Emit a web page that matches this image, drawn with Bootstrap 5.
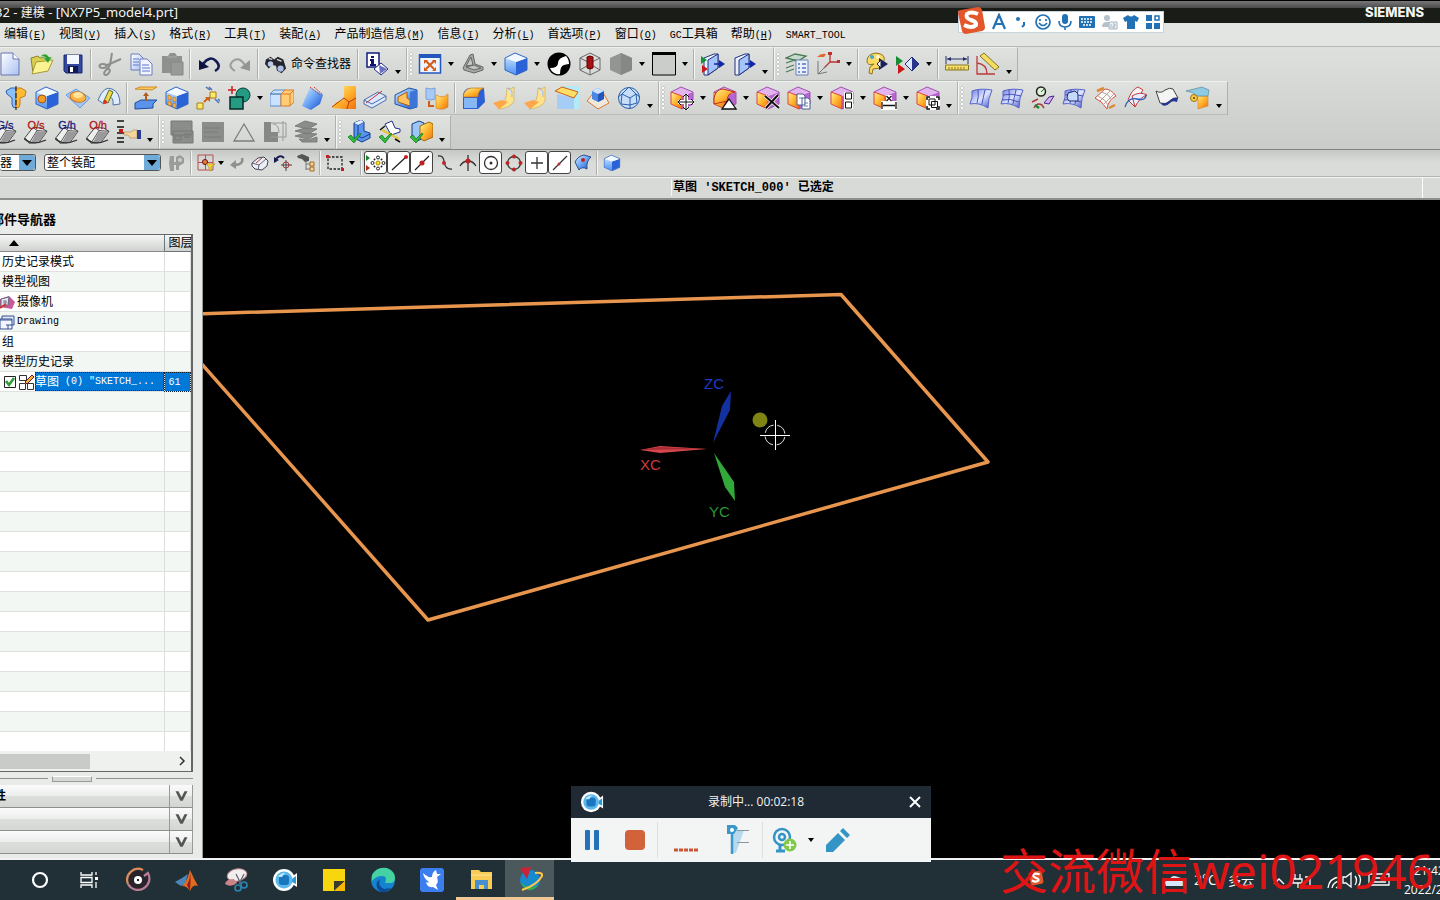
<!DOCTYPE html>
<html lang="zh-CN">
<head>
<meta charset="utf-8">
<meta name="viewport" content="width=device-width, initial-scale=1">
<title>建模 - [NX7P5_model4.prt]</title>
<link href="https://cdn.jsdelivr.net/npm/bootstrap@5.3.0/dist/css/bootstrap.min.css" rel="stylesheet">
<style>
body{font-family:"Liberation Sans","Noto Sans CJK SC",sans-serif;font-size:12px;line-height:16px;color:#000;background:#d6d9d6;overflow:hidden}
button{border:0;background:none;padding:0;color:inherit;flex:none}
svg{display:block;flex:none}
.mono{font-family:"Liberation Mono","Noto Sans CJK SC",monospace;font-size:10px}
.titlebar{height:23px;background:linear-gradient(#000 0 1px,#777 1px,#4a4a4a 8px,#1a1c18 8px);color:#f4f4f4;font-family:"Noto Sans","Noto Sans CJK SC",sans-serif}
.titlebar span{padding-top:2px}
.apptitle{margin-left:-5px;font-size:13px}
.apptitle i{font-style:normal;font-size:12px}
.brand{font-family:Inter,"Liberation Sans",sans-serif;font-weight:800;font-size:13px}
.menubar{height:24px;background:#e2e5e2;padding:2px 0 0 4px;gap:13px;border-bottom:1px solid #b4b7b4}
.menubar a{color:#000;text-decoration:none;white-space:nowrap}
.bars{background:linear-gradient(#dde0dd,#c9ccc9);border-bottom:1px solid #808380}
.barrow{height:34px}
.grp{height:34px;border-top:1px solid #eff1ef;border-bottom:1px solid #b9bcb9;border-right:1px solid #aeb1ae;padding-right:2px;background:linear-gradient(#dfe2df,#d1d4d1)}
.grp+.grp{border-left:1px solid #f4f6f4}
.grip{width:6px;height:24px;background:radial-gradient(circle,#fafafa 1px,#a9aca9 2px,transparent 2px) 1px 0/4px 4px repeat-y}
.tb{width:31px;height:30px;display:flex;align-items:center;justify-content:center}
.tb svg{width:24px;height:24px}
.finder{width:94px;height:30px;display:flex;align-items:center;gap:4px;padding-left:4px}
.car{width:12px;height:24px;display:flex;align-items:center;justify-content:center}
.car::after{content:"";border:3px solid transparent;border-top:4px solid #000;border-bottom:0}
.car.lo{align-items:flex-end;padding-bottom:2px}
.car.slim{width:8px}
.bsep{width:6px;height:30px;background:linear-gradient(90deg,transparent 2px,#acafac 2px 3px,#f4f6f4 3px 4px,transparent 4px)}
.selbar{height:27px;background:linear-gradient(#c6c9c6,#d9dcd9 50%);border-bottom:1px solid #b2b5b2}
.selbar .bsep{height:24px}
.combo{appearance:none;height:17px;border:1px solid #555;border-radius:3px;padding:0 20px 0 2px;font-size:12px;line-height:14px;color:#000;background:#fff;font-family:inherit}
.combowrap{position:relative;height:17px}
.combowrap svg{position:absolute;right:1px;top:1px;pointer-events:none}
.sb{width:23px;height:23px;display:flex;align-items:center;justify-content:center}
.sb svg{width:20px;height:20px}
.sb.on{background:#fff;border:1px solid #444;border-radius:3px}
.cue{height:23px;background:#d7dad7;border-bottom:2px solid #8b8e8b;border-top:1px solid #f3f5f3}
.cue output{font-size:12px;font-weight:700;border-left:1px solid #f5f5f5;white-space:pre;padding-left:1px}
.cue .mono{font-size:12px}
.side{width:203px;background:#e8ebe8;border-right:1px solid #9a9d9a;overflow:hidden}
.side h1{font-size:13px;line-height:18px;font-weight:700;margin:11px 0 5px -9px}
.tree{width:193px;background:#fff;border:solid #666;border-width:1px 2px 1px 0;overflow:hidden}
.tree table{width:191px;table-layout:fixed;border-collapse:collapse}
.tree th{height:17px;padding:0;background:linear-gradient(#f5f6f5,#cfd2cf);border-bottom:1px solid #888;font-weight:400;overflow:hidden;white-space:nowrap;line-height:15px}
.tree td{height:20px;padding:0;border-bottom:1px solid #dfe1df;border-right:1px solid #dcdfdc;white-space:nowrap;overflow:hidden;line-height:16px}
.tree tbody tr:nth-child(even){background:#f3f7f4}
.tree .cell{display:flex;align-items:center;gap:2px;padding:1px 0 0 2px;height:19px}
.selrow{background:#0078d7;color:#fff;outline:1px dotted #123;outline-offset:-1px}
.hbar{height:20px;background:#eff1ef}
.hthumb{width:90px;height:15px;background:#c9cbc9}
.split{height:13px}
.split hr{margin:0;border-top:1px solid #8f928f;opacity:1;flex:1}
.split span{width:40px;height:6px;border:1px solid #999;border-top-color:#fff;background:#d5d8d5}
.pane{width:193px;height:23px;border-bottom:1px solid #8d908d;border-right:1px solid #999;background:linear-gradient(#fafbfa,#eceeec 50%,#dcdfdc 50%,#d3d6d3);font-weight:700}
.pane button{width:23px;height:22px;border-left:1px solid #999}
.axis{font-family:"Liberation Sans",sans-serif;font-size:15px}
.view{background:#000}
.taskbar{height:42px;border-top:2px solid #f2f2f2;background:#213037;color:#fff;padding-left:15px}
.tk{width:49px;height:40px;display:flex;align-items:center;justify-content:center}
.tk svg{width:26px;height:26px}
.tk.run{border-bottom:3px solid #f0c896}
.tk.act{background:#4b585c}
.ime{position:absolute;left:958px;top:11px;width:206px;height:22px;background:#fff;border:1px solid #c9d3da;padding-left:29px}
.ime button{width:22px;display:flex;justify-content:center}
.ime svg{width:18px;height:18px}
.ime .slogo{position:absolute;left:-2px;top:-6px;width:29px;height:29px}
.rec{position:absolute;left:571px;top:786px;width:360px;background:#f3f5f5}
.rechead{height:32px;background:#1f2a35;color:#f2f2f2;font-family:"Open Sans","Noto Sans CJK SC",sans-serif}
.recbody{height:44px}
.recbody .pausebtn{margin-right:20px}
.recbody .flagbtn{margin:0 8px 0 20px}
.rline{width:1px;height:36px;background:#dcdfe0}
.wm{position:absolute;right:6px;bottom:0;font-family:"Noto Sans","Noto Sans CJK SC",sans-serif;font-size:48px;line-height:58px;color:#df1414;white-space:nowrap;pointer-events:none}
.tray{font-family:"Open Sans","Noto Sans CJK SC",sans-serif;width:420px}
</style>
</head>
<body class="vh-100 d-flex flex-column">
<svg width="0" height="0" class="position-absolute" aria-hidden="true">
<defs>
<linearGradient id="gb" x1="0" y1="0" x2="1" y2="1"><stop offset="0" stop-color="#dff0ff"/><stop offset=".5" stop-color="#6aa5f5"/><stop offset="1" stop-color="#1747c8"/></linearGradient>
<linearGradient id="go" x1="0" y1="0" x2="1" y2="1"><stop offset="0" stop-color="#fff29a"/><stop offset=".5" stop-color="#ffb52e"/><stop offset="1" stop-color="#f07010"/></linearGradient>
<linearGradient id="gl" x1="0" y1="0" x2="1" y2="1"><stop offset="0" stop-color="#fff"/><stop offset="1" stop-color="#a9c0f2"/></linearGradient>
<linearGradient id="gs" x1="0" y1="0" x2="1" y2="1"><stop offset="0" stop-color="#6878e0"/><stop offset=".5" stop-color="#e0e6ff"/><stop offset="1" stop-color="#3548c4"/></linearGradient>
<linearGradient id="gv" x1="0" y1="0" x2="0" y2="1"><stop offset="0" stop-color="#b9dcff"/><stop offset="1" stop-color="#4e8ff0"/></linearGradient>
</defs>
<symbol id="new" viewBox="0 0 24 24"><path d="M2 1h12l6 6v16H2z" fill="url(#gl)" stroke="#6875b5"/><path d="M14 1v6h6" fill="#fff" stroke="#6875b5"/></symbol>
<symbol id="open" viewBox="0 0 24 24"><path d="M1 6l7-2 2 2 8-1v5H7L3 21z" fill="#d9cf50" stroke="#8b842c"/><path d="M2 22L6 10l17-2-5 11z" fill="#fbf391" stroke="#a79b34"/><path d="M10 5q5-6 9 0h3l-4 6-5-5h3q-3-3-6-1z" fill="#2f9d2f" stroke="#bdeab5" stroke-width=".5"/></symbol>
<symbol id="save" viewBox="0 0 24 24"><path d="M3 3h18v18H5l-2-2z" fill="#3548a0" stroke="#1b2870"/><path d="M6 3h12v9H6z" fill="#f4f7ff"/><path d="M7 14h10v7H7z" fill="#111a50"/><path d="M9 15h3v5H9z" fill="#fff"/></symbol>
<symbol id="cut" viewBox="0 0 24 24"><g fill="none" stroke="#8c8f8c" stroke-width="2"><path d="M14 1l-2 12-3 4M23 7L7 14"/><ellipse cx="5" cy="14" rx="3.500" ry="2"/><ellipse cx="9" cy="20" rx="3.500" ry="2" transform="rotate(-50 9 20)"/></g></symbol>
<symbol id="copy" viewBox="0 0 24 24"><path d="M2 2h8l4 4v12H2z" fill="url(#gl)" stroke="#6d7cbd"/><path d="M11 7h7l5 5v11H11z" fill="#f2f5ff" stroke="#6d7cbd"/><path d="M4 7h6M4 10h6M4 13h6M13 13h7M13 16h8M13 19h8" stroke="#5a77cc"/></symbol>
<symbol id="paste" viewBox="0 0 24 24"><path d="M2 4h6l2-3h5l2 3h5v17H2z" fill="#8e918e"/><path d="M11 10h12v13H11z" fill="#979a97" stroke="#858885"/><path d="M7 5h10" stroke="#9d9f9d" stroke-width="2"/></symbol>
<symbol id="undo" viewBox="0 0 24 24"><path d="M6 12q7-9 13-3t-1 10" fill="none" stroke="#151a50" stroke-width="2.500"/><path d="M2 8v10l10-3z" fill="#0d1240"/></symbol>
<symbol id="redo" viewBox="0 0 24 24"><path d="M17 13q-6-9-12-4t2 10" fill="none" stroke="#9a9d9a" stroke-width="2"/><path d="M22 8v11l-10-3z" fill="#929592"/></symbol>
<symbol id="bino" viewBox="0 0 24 24"><path d="M1 7l5-3 4 3 4-3 6 3 3 10-5 5-5-3-1-5-4-1-4 4-4-5z" fill="#23242c"/><circle cx="6" cy="12" r="3" fill="#bcc9ef"/><circle cx="17" cy="17" r="3.400" fill="#aebbe7"/><path d="M4 6l4 1M13 7l5 2" stroke="#d0d0d8" stroke-width="1.500"/></symbol>
<symbol id="info" viewBox="0 0 24 24"><path d="M2 1h12v14H2z" fill="#fff" stroke="#111a80" stroke-width="1.500"/><path d="M6 4h3v2H6zM5 7h4v5h2v2H5v-2h1V9H5z" fill="#101470"/><path d="M9 17l7-6 7 6-7 6z" fill="#fff" stroke="#222a80"/><path d="M14 13l8 4-7 5z" fill="#6970c0"/></symbol>
<symbol id="fit" viewBox="0 0 24 24"><path d="M1.500 3h21v18h-21z" fill="#eef4ff" stroke="#2457be" stroke-width="1.500"/><path d="M1 2h22v4H1z" fill="#2457be"/><path d="M8 9l8 8M16 9l-8 8" stroke="#d65b16" stroke-width="2"/><path d="M6 8h4l-4 4zM18 8v4l-4-4zM6 19v-4l4 4zM18 19h-4l4-4z" fill="#d65b16"/></symbol>
<symbol id="tray" viewBox="0 0 24 24"><path d="M2 16L9 3l3-1 2 10 8 3v3l-9 3-10-3z" fill="#a5a8a5" stroke="#666"/><path d="M5 14l5-9 2 8z" fill="#c6c9c6" stroke="#666"/><path d="M5 15l8-2 7 3-7 2z" fill="#bfc2bf" stroke="#666"/></symbol>
<symbol id="cube" viewBox="0 0 24 24"><path d="M1 6l11 4v13L1 18z" fill="url(#gv)"/><path d="M12 10l11-4v12l-11 5z" fill="#2a63d8"/><path d="M1 6l10-5 12 5-11 4z" fill="#f1f8ff"/><path d="M1 6l10-5 12 5v12l-11 5-11-5z" fill="none" stroke="#2f66c6"/></symbol>
<symbol id="yin" viewBox="0 0 24 24"><circle cx="12" cy="12" r="11.500"/><path d="M19 4q-8 2-8 7 0 5-8 5 3 7 10 6 0-8 4-9 4-1 5-1 0-5-3-8z" fill="#fff"/><path d="M22 13q-7 0-8 9 7-1 8-9z"/></symbol>
<symbol id="hexred" viewBox="0 0 24 24"><path d="M12 1l10 5v12l-10 5-10-5V6zM2 6l10 5 10-5M12 11v12M2 18l10-6 10 6" fill="#dadcda" stroke="#666"/><path d="M9 5q3-2 6 0v11q-3 2-6 0z" fill="#a31212" stroke="#600"/></symbol>
<symbol id="hexgray" viewBox="0 0 24 24"><path d="M12 1l11 5v12l-11 5-11-5V6z" fill="#929592"/><path d="M12 1v22l11-5V6z" fill="#858885"/></symbol>
<symbol id="rectb" viewBox="0 0 24 24"><path d="M.5 1h23v22H.5z" fill="#cbcdcb" stroke="#000"/><path d="M0 0h24v3H0z"/></symbol>
<symbol id="door" viewBox="0 0 24 24"><path d="M3 6l10-4h4v14l-10 7H3z" fill="#e9f1ff" stroke="#22307e"/><path d="M7 8l10-6v14L7 23z" fill="#a5c4fa" stroke="#22307e"/><path d="M13 12h7" stroke="#1226a8" stroke-width="1.500"/><path d="M18 8l6 4-6 4z" fill="#1226a8"/></symbol>
<symbol id="door2" viewBox="0 0 24 24"><use href="#door"/><path d="M0 4l6 4-6 4z" fill="#159335"/><path d="M1 13l6 4-6 4z" fill="#c91818"/></symbol>
<symbol id="layers" viewBox="0 0 24 24"><path d="M1 6l9-4 11 2-8 5zM1 11l9-3 9 2M1 16l8-3M1 20l8-3" fill="#c6dacb" stroke="#4b7b58" stroke-width="1.300"/><path d="M11 8h12v15H11z" fill="#eaf0ff" stroke="#6980b5"/><path d="M13 12h2m2 0h4m-8 4h2m2 0h4m-8 4h2m2 0h4" stroke="#5276bd" stroke-width="1.500"/></symbol>
<symbol id="axes" viewBox="0 0 24 24"><path d="M14 1v9h10M14 10l-6 6" stroke="#bc3030" fill="none" stroke-width="1.300"/><path d="M2 9v13l9-2M2 22l7-7" stroke="#777" fill="none"/><path d="M1 5q4-4 9-3L8 5z" fill="#e0662a"/><path d="M12 0h4v3h-4zM21 8h3v3h-3z" fill="#bc3030"/></symbol>
<symbol id="palette" viewBox="0 0 24 24"><path d="M2 9q0-7 9-8 10 1 8 8l-4 4v3l-7 1-1 5-3-1 1-6 4-3q-7 2-7-3z" fill="#f9db63" stroke="#927319"/><circle cx="7" cy="5" r="2" fill="#40a4d7"/><circle cx="13" cy="5" r="2" fill="#fff6cc"/><path d="M14 6l9 6-9 6z" fill="#16205c"/><path d="M12 12l4-4v8z" fill="#f1f2ff" stroke="#223"/></symbol>
<symbol id="rgdiam" viewBox="0 0 24 24"><path d="M0 4l7 5-7 5z" fill="#158b35"/><path d="M2 12l7 5-7 5z" fill="#c91818"/><path d="M9 12l7-7 7 7-7 7z" fill="#dfe7ff" stroke="#222a70"/><path d="M16 5l7 7-7 7z" fill="#28368c"/></symbol>
<symbol id="ruler" viewBox="0 0 24 24"><path d="M.5 13h23v5H.5z" fill="#f6e06c" stroke="#8b7920"/><path d="M4 15v3m3-3v3m3-3v3m3-3v3m3-3v3m3-3v3" stroke="#8b7920"/><path d="M1 4v8M23 4v8M2 7h20" stroke="#26306b"/><path d="M2 7l4-2v4zM22 7l-4-2v4z" fill="#26306b"/></symbol>
<symbol id="angle" viewBox="0 0 24 24"><path d="M1 4v18h18M1 11q10 1 10 11" fill="none" stroke="#ba3a3a" stroke-width="1.300"/><path d="M4 4l4-3 15 14-4 3z" fill="#f4de62" stroke="#847223"/></symbol>
<symbol id="sk" viewBox="0 0 24 24"><path d="M2 5l5-3h5v20q-4 0-4-4v-6L3 8z" fill="#8cc0f8" stroke="#2c62ba"/><path d="M12 2h5l5 3-1 5-5 2v6q0 4-4 4z" fill="#fdbc34" stroke="#c67a18"/><path d="M12 0v24" stroke="#111" stroke-dasharray="5 2"/></symbol>
<symbol id="hole" viewBox="0 0 24 24"><use href="#cube"/><circle cx="7" cy="13" r="4" fill="#f69a28" stroke="#9b5618"/></symbol>
<symbol id="boss" viewBox="0 0 24 24"><path d="M0 9l10-6 14 9-10 10z" fill="#9fc7f6" stroke="#6a9ce0"/><ellipse cx="12" cy="11" rx="8" ry="5" fill="#ffb545" stroke="#d3701d" transform="rotate(12 12 11)"/><ellipse cx="12" cy="9" rx="5" ry="3" fill="#ffe59a"/></symbol>
<symbol id="sweep" viewBox="0 0 24 24"><path d="M1 14Q7-1 15 3q8 3 8 15l-7 1q1-8-4-8-4 1-5 7z" fill="#dfecff" stroke="#5070a5"/><path d="M12 4l4 2-5 11-4-2z" fill="#f6d34c" stroke="#4c7120"/><circle cx="8" cy="16" r="2" fill="#d83218"/></symbol>
<symbol id="ext" viewBox="0 0 24 24"><path d="M1 17l6-3h16l-4 4v4l-18 1z" fill="#5a94ea" stroke="#1d4ba2"/><path d="M1 3l5-2h17l-5 3z" fill="#ffca62" stroke="#d38a22"/><path d="M12 8v7" stroke="#b45a1a" stroke-width="2"/><path d="M9 10l3-4 3 4z" fill="#b45a1a"/></symbol>
<symbol id="patt" viewBox="0 0 24 24"><use href="#cube"/><path d="M3 9l3 1v4l-3-1zm5 2l3 1v4l-3-1zm-5 4l3 1v4l-3-1zm5 2l3 1v4l-3-1z" fill="#ffb23e" stroke="#b56b20" stroke-width=".6"/></symbol>
<symbol id="inst" viewBox="0 0 24 24"><path d="M1 17h6v6H1zM14 6h6v6h-6z" fill="#ffe96c" stroke="#a07c12"/><path d="M8 16l4-4" stroke="#cf6017" stroke-width="2"/><path d="M9 11h5v5z" fill="#cf6017"/><path d="M10 1l4 3M13 1l3 3M19 13l4 4M22 13l2 2" fill="none" stroke="#4a70b8" stroke-width="1.500"/></symbol>
<symbol id="unite" viewBox="0 0 24 24"><circle cx="16" cy="9" r="7" fill="#259b83" stroke="#053b31"/><path d="M3 11h13v12H3z" fill="#259b83" stroke="#042a24" stroke-width="1.500"/><path d="M5 0v8M1 4h8" stroke="#cc1c1c" stroke-width="1.500"/></symbol>
<symbol id="trim" viewBox="0 0 24 24"><path d="M0 8h11v12H0zM0 8l4-4h11l-4 4z" fill="#c8e2ff" stroke="#5d8ac3"/><path d="M11 8l4-4h9v12l-4 4h-9z" fill="#ffcc78" stroke="#dd7d22"/><path d="M11 8h9v12M20 8l4-4" fill="none" stroke="#dd7d22"/></symbol>
<symbol id="off" viewBox="0 0 24 24"><path d="M1 20L9 1l13 8-3 9-9 6z" fill="url(#gb)"/><path d="M9 1l10 8M13 1l9 8" stroke="#d63a2a" stroke-dasharray="2 1"/></symbol>
<symbol id="split" viewBox="0 0 24 24"><path d="M12 0h12v23H14L0 22l4-6q8 0 8-6z" fill="url(#go)"/><path d="M0 21l12-9 5 4 7-4M17 16l-2 7" fill="none" stroke="#bb3c0b"/></symbol>
<symbol id="plate" viewBox="0 0 24 24"><path d="M1 14l14-8 8 4v4L9 22l-8-4z" fill="#dbe9ff" stroke="#4b6ba5"/><path d="M1 14l8 4 14-8" fill="none" stroke="#4b6ba5"/><path d="M3 17L19 5" stroke="#cd3028"/></symbol>
<symbol id="boxin" viewBox="0 0 24 24"><path d="M1 9l14-7 8 2v17l-7 2-15-5z" fill="url(#gb)" stroke="#21509f"/><path d="M4 11l9-5v6l3 2v6L4 16z" fill="#ffc25e" stroke="#a75d13"/><path d="M16 6v17l7-2V4z" fill="#3c74d8"/></symbol>
<symbol id="curv" viewBox="0 0 24 24"><path d="M1 2q5 2 9 0v11q-4 2-9 0z" fill="#a7cbf6" stroke="#7aa0d5"/><path d="M11 9q7 4 12-1v13q-6 4-12 1z" fill="url(#go)" stroke="#d07a1e" stroke-width=".6"/><path d="M4 15v5h5" stroke="#cf5b17" stroke-width="2" fill="none"/></symbol>
<symbol id="blend" viewBox="0 0 24 24"><path d="M1 9q1-7 8-7h13l1 14-7 7H1z" fill="#2c60d6"/><path d="M1 11q1-8 8-9h13q-6 2-6 9z" fill="url(#go)" stroke="#b56a18" stroke-width=".6"/><path d="M2 12h13v10H2z" fill="#86b8f5"/></symbol>
<symbol id="face" viewBox="0 0 24 24"><path d="M14 2q4 2 7-1v14q-3 7-16 8 9-5 9-21z" fill="#ffe38a" stroke="#c9a24c" stroke-width=".6"/><path d="M0 17l9-3 6 2-9 7z" fill="#ffa54a"/><path d="M14 2l5 3v6" fill="#d7e4f9" stroke="#829ac0" stroke-width=".6"/></symbol>
<symbol id="cham" viewBox="0 0 24 24"><path d="M6 0h18v23H12z" fill="#b2eaf7"/><path d="M2 8l17 4v11H2z" fill="#a6cdf5"/><path d="M0 5l7-4 16 5-4 6z" fill="#ffe064" stroke="#d45a1b"/></symbol>
<symbol id="cubep" viewBox="0 0 24 24"><path d="M1 15L9 5h7l7 12-11 6z" fill="#f1e7db" stroke="#d47838"/><path d="M6 5l6-3 6 3v8l-6 3-6-3z" fill="#4a86e2"/><path d="M12 8l6-3v8l-6 3z" fill="#2457be"/><path d="M6 5l6-3 6 3-6 3z" fill="#cfe3ff"/></symbol>
<symbol id="sphere" viewBox="0 0 24 24"><circle cx="12" cy="12" r="10.500" fill="#c7defa" stroke="#2c5ea8"/><path d="M12 1L5 8l8 4 6-4-7-7M1 11l4-3M23 11l-4-3M13 12v11M5 8l-1 10 9 1 7-2-1-9" fill="none" stroke="#2c5ea8"/></symbol>
<symbol id="pc" viewBox="0 0 24 24"><path d="M1 6l11 4v13L1 18z" fill="url(#go)"/><path d="M12 10l11-4v12l-11 5z" fill="#b865cf"/><path d="M1 6l10-5 12 5-11 4z" fill="#e3b5ee"/><path d="M1 6l11 4v13L1 18z" fill="none" stroke="#e0443a"/><path d="M1 6l10-5 12 5v12l-11 5" fill="none" stroke="#a050b0"/></symbol>
<symbol id="pmove" viewBox="0 0 24 24"><use href="#pc"/><path d="M16 8v16M8 16h16" stroke="#fff" stroke-width="4"/><path d="M16 9v14M9 16h14M13 11l3-3 3 3M13 21l3 3 3-3M11 13l-3 3 3 3M21 13l3 3-3 3" stroke="#111" fill="none"/></symbol>
<symbol id="ptri" viewBox="0 0 24 24"><use href="#pc"/><path d="M1 12Q3 3 10 3l12 3q-8 1-8 9L1 18z" fill="url(#go)" stroke="#c22d18"/><path d="M16 13l7 10H9z" fill="#fff" stroke="#111" stroke-width="1.300"/></symbol>
<symbol id="px" viewBox="0 0 24 24"><use href="#pc"/><path d="M9 10l14 12M22 9L10 22" stroke="#fff" stroke-width="3.500"/><path d="M9 10l14 12M22 9L10 22" stroke="#111" stroke-width="2"/></symbol>
<symbol id="pcopy" viewBox="0 0 24 24"><use href="#pc"/><path d="M10 8h6l2 2v9h-8zM15 12h6l2 2v9h-8z" fill="#fff" stroke="#4b5e92"/><path d="M12 12h4m1 5h4m-4 3h4" stroke="#6680b4"/></symbol>
<symbol id="pbox" viewBox="0 0 24 24"><use href="#pc"/><path d="M14 6h9v17h-9z" fill="#fff"/><path d="M15.500 7h6v6h-6zM15.500 16h6v6h-6z" fill="#fff" stroke="#111"/></symbol>
<symbol id="pdim" viewBox="0 0 24 24"><use href="#pc"/><path d="M8 15h16v9H8zM13 9h6v7h-6z" fill="#fff"/><path d="M9 16v7M23 16v7M10 19.500h12M13.500 10l5 5M18.500 10l-5 5" stroke="#111" stroke-width="1.300"/></symbol>
<symbol id="pgrp" viewBox="0 0 24 24"><use href="#pc"/><path d="M10 10h14v14H10z" fill="#fff"/><path d="M13 13h6v6h-6zM15.500 15.500h6v6h-6z" fill="none" stroke="#111"/><path d="M11 14v-3h3M20 11h3v3M23 20v3h-3M14 23h-3v-3" fill="none" stroke="#111" stroke-width="1.500"/></symbol>
<symbol id="surf" viewBox="0 0 24 24"><path d="M3 5q8-3 20-1-4 8-4 18Q10 16 1 18q3-7 2-13z" fill="url(#gs)" stroke="#5464c8"/><path d="M9 4q1 7-1 13M16 4q-2 8-3 14" fill="none" stroke="#4453ba"/></symbol>
<symbol id="surf2" viewBox="0 0 24 24"><use href="#surf"/><path d="M3 9q8-2 18 1M2 14q8-2 17 2" fill="none" stroke="#4453ba"/></symbol>
<symbol id="curves" viewBox="0 0 24 24"><circle cx="10" cy="5.500" r="4.500" fill="#dff0db" stroke="#222" stroke-width="1.500"/><path d="M10 6l3-3" stroke="#14771a"/><path d="M1 16l6-3M3 22q3-6 8-3l2 3" fill="none" stroke="#a93b3b" stroke-width="1.500"/><path d="M13 17l5-6 5-1-5 8z" fill="#d0b4ef" stroke="#4c2489"/><path d="M4 19l4 3" stroke="#178831" stroke-width="2.500"/></symbol>
<symbol id="surf3" viewBox="0 0 24 24"><use href="#surf2"/><path d="M6 7l7-2 3 3v7H7l-2-3z" fill="#c5d9fa" stroke="#202b72"/></symbol>
<symbol id="mesh" viewBox="0 0 24 24"><path d="M2 12L12 3q6 0 11 7-8 4-9 13-5-8-12-11z" fill="#fafafa" stroke="#d5533a"/><path d="M5 10q7 3 10 9M9 6q7 2 10 8M6 16l12-12M10 19L21 8" stroke="#b9a09a" fill="none"/><path d="M4 5l7-3M16 22l6-3" stroke="#de8a32" stroke-width="2.500"/></symbol>
<symbol id="cross" viewBox="0 0 24 24"><path d="M4 14Q8 3 14 1l5 3q-5 6-8 17z" fill="#f6f3f3" stroke="#c23b43"/><path d="M8 10q8-5 15-1-7 2-12 12z" fill="#e6edff" stroke="#c23b43"/><path d="M1 21Q4 11 13 13t9-4" fill="none" stroke="#315cb8" stroke-width="1.300"/></symbol>
<symbol id="patch" viewBox="0 0 24 24"><path d="M1 5q5 3 9-1 5-3 8-1l5 9q-5-1-8 3-4 4-10 2z" fill="#f4f4f4" stroke="#444"/><path d="M6 17q6 1 9-3 4-3 8-2l-1 4q-5-2-7 1-4 4-8 2z" fill="#28368f"/></symbol>
<symbol id="roll" viewBox="0 0 24 24"><path d="M9 10h13v10l-10 3V13z" fill="url(#go)" stroke="#cf8339" stroke-width=".6"/><path d="M0 5l16-4 7 3-1 6H9q2-3-9-5z" fill="#8ccbe2" stroke="#537f94" stroke-width=".6"/><circle cx="8" cy="12" r="3.500" fill="#f7cf42" stroke="#9a721b"/><circle cx="8" cy="12" r="1" fill="#722"/></symbol>
<symbol id="box" viewBox="0 0 24 24" preserveAspectRatio="none"><path d="M1 16l8-13 9 1 5 4-8 14-10 1z" fill="#eeeeef" stroke="#333"/><path d="M9 3l4 4 10 1M13 7L6 21" fill="none" stroke="#444"/><path d="M13 8l9 1-7 12-8 1z" fill="#9a9a9c"/><path d="M0 17q8 10 22 2" fill="none" stroke="#333" stroke-width="1.500"/></symbol>
<symbol id="hand" viewBox="0 0 24 24"><path d="M0 1h7M0 7h7M0 13h7M0 18h7M0 22h7" stroke="#111" stroke-width="1.500"/><path d="M2 9h4v4H2z" fill="#c21919"/><path d="M7 12h7l2-2h4v8h-7l-2-3H7z" fill="#f5d49b" stroke="#a78757" stroke-width=".6"/><path d="M20 10h4v9h-4z" fill="#283d91"/></symbol>
<symbol id="gry1" viewBox="0 0 24 24"><path d="M1 1h21v14H1zM3 11h20v12H3z" fill="#8a8d8a" stroke="#767976"/><path d="M5 16h6v4H5zM14 14h7M14 17h7" stroke="#777" fill="none"/></symbol>
<symbol id="gry2" viewBox="0 0 24 24"><path d="M1 2h22v20H1z" fill="#8a8d8a"/><path d="M3 8h17M3 12h14M3 17h17" stroke="#7a7d7a"/></symbol>
<symbol id="gry3" viewBox="0 0 24 24"><path d="M12 4l10 17H2z" fill="none" stroke="#7c7f7c" stroke-width="1.300"/></symbol>
<symbol id="gry4" viewBox="0 0 24 24"><path d="M1 2h7v10h7v10H1z" fill="#858885"/><path d="M8 3h15v14H8M20 1v20M10 4q6 0 6 9" stroke="#999" fill="none"/></symbol>
<symbol id="gry5" viewBox="0 0 24 24"><path d="M1 6l10-5 12 3-9 5zM1 11l10-3 12 1-9 5zM1 16l10-3 12 1-9 5zM5 19l9 1 9-3v5H8z" fill="#8a8d8a" stroke="#7a7d7a"/></symbol>
<symbol id="tick" viewBox="0 0 24 24"><path d="M1 17l3-2 3 4 6-6 1 1-7 9z" fill="#2fbd3b" stroke="#0a7118" stroke-width=".7"/></symbol>
<symbol id="chk1" viewBox="0 0 24 24"><path d="M7 3l7-3 3 2v9l6 2v5l-8 4-8-4z" fill="#5a94ee" stroke="#153d8f"/><path d="M7 3l4 2v11l4 2 8-4M11 5l6-3" fill="none" stroke="#153d8f"/><path d="M7 3l7-3 3 2-6 3z" fill="#e5f0ff"/><use href="#tick"/></symbol>
<symbol id="chk2" viewBox="0 0 24 24"><path d="M7 4l7-3 3 7 5 1v3l-9 3z" fill="#fff" stroke="#25318a"/><path d="M4 10l17 9" stroke="#e4c63c" stroke-width="2"/><path d="M2 10l5-4M17 19l5 3" stroke="#111" stroke-width="1.500"/><use href="#tick"/></symbol>
<symbol id="chk3" viewBox="0 0 24 24"><path d="M3 4l7-3 5 2v15l-7 3-5-3z" fill="#9bc6f5" stroke="#153d8f"/><path d="M11 6l9-4 4 2v13l-9 4-4-3z" fill="url(#go)" stroke="#9b6b0f"/><use href="#tick"/></symbol>
<symbol id="glove" viewBox="0 0 20 20"><path d="M3 3h4v6h2V4l4-2 4 3v5l-5 3v4H9v-5H7v6H3l-1-8z" fill="#999c99"/><circle cx="13" cy="7" r="2" fill="#ccc"/></symbol>
<symbol id="filt" viewBox="0 0 20 20"><path d="M2 2h15v15H2zM9.500 2v15M2 9.500h15" fill="none" stroke="#b94f4f"/><circle cx="9" cy="9" r="2.500" fill="#d98434" stroke="#702"/><path d="M10 11h9l-4 3v4l-2-1v-3z" fill="#f8da35" stroke="#a78212" stroke-width=".6"/></symbol>
<symbol id="ret" viewBox="0 0 20 20"><path d="M15 5q2 7-9 7" fill="none" stroke="#8d908d" stroke-width="2.500"/><path d="M3 12l6-5v9z" fill="#8d908d"/></symbol>
<symbol id="wire" viewBox="0 0 20 20"><path d="M2 10l6-5 6-1 4 4-1 5-5 4-7-1-3-3z" fill="#eceef6" stroke="#445"/><path d="M2 10l7 2 7-6M9 12l-1 5" fill="none" stroke="#667"/><path d="M6 10l6-5" stroke="#b24343"/></symbol>
<symbol id="rot" viewBox="0 0 20 20"><path d="M3 6q4-5 8-1" fill="none" stroke="#151a50" stroke-width="2"/><path d="M1 4v6l5-3z" fill="#151a50"/><circle cx="13" cy="12" r="3" fill="none" stroke="#b33"/><path d="M13 7v11M8 12h11" stroke="#444"/></symbol>
<symbol id="find" viewBox="0 0 20 20"><path d="M1 3l5-2 7 3v4l-4 1-3-3-4-1z" fill="#555"/><path d="M10 9v8M10 11h4M10 16h4" stroke="#777"/><path d="M14 9h4v4h-4zM14 14h4v4h-4z" fill="#f1d2a3" stroke="#a36a22"/></symbol>
<symbol id="dash" viewBox="0 0 20 20"><path d="M3 4h14v12H3z" fill="none" stroke="#222" stroke-dasharray="2.500 1.500" stroke-width="1.300"/><path d="M1 2h3v3H1zM16 15h3v3h-3z" fill="#c22020"/></symbol>
<symbol id="s1" viewBox="0 0 20 20"><path d="M0 2l4 3-4 3z" fill="#15832a"/><path d="M0 12l4 3-4 3z" fill="#b62c15"/><circle cx="12" cy="10" r="2" fill="#ffe630" stroke="#a80"/><g fill="#fff" stroke="#222"><circle cx="12" cy="4.500" r="1.500"/><circle cx="12" cy="15.500" r="1.500"/><circle cx="6.500" cy="10" r="1.500"/><circle cx="17.500" cy="10" r="1.500"/></g><path d="M8 6l1 1M15 6l1 1M8 14l1-1M16 14l-1-1" stroke="#222" stroke-width="2"/></symbol>
<symbol id="s2" viewBox="0 0 20 20"><path d="M3 17L17 4" stroke="#222" stroke-width="1.300"/><circle cx="17" cy="4" r="2" fill="#c22020"/></symbol>
<symbol id="s3" viewBox="0 0 20 20"><path d="M3 17L17 3" stroke="#222" stroke-width="1.300"/><circle cx="10" cy="10" r="2.500" fill="#c22020"/></symbol>
<symbol id="s4" viewBox="0 0 20 20"><path d="M3 3q5-1 6 5 1 9 8 8" fill="none" stroke="#333" stroke-width="1.300"/><circle cx="9" cy="10" r="2" fill="#b92929"/></symbol>
<symbol id="s5" viewBox="0 0 20 20"><path d="M10 2v16M2 13q3-5 8-5t8 5" fill="none" stroke="#333" stroke-width="1.300"/><circle cx="10" cy="8" r="2.500" fill="#c22020"/></symbol>
<symbol id="s6" viewBox="0 0 20 20"><circle cx="10" cy="10" r="6.500" fill="none" stroke="#333" stroke-width="1.300"/><circle cx="10" cy="10" r="1.500" fill="#333"/></symbol>
<symbol id="s7" viewBox="0 0 20 20"><circle cx="10" cy="10" r="6.500" fill="none" stroke="#333" stroke-width="1.300"/><g fill="#b92525"><circle cx="10" cy="3.500" r="2"/><circle cx="10" cy="16.500" r="2"/><circle cx="3.500" cy="10" r="2"/><circle cx="16.500" cy="10" r="2"/></g></symbol>
<symbol id="s8" viewBox="0 0 20 20"><path d="M10 4v12M4 10h12" stroke="#333" stroke-width="1.300"/></symbol>
<symbol id="s9" viewBox="0 0 20 20"><path d="M3 17L17 3" stroke="#333" stroke-width="1.300"/><circle cx="9" cy="11" r="1.500" fill="#b33"/></symbol>
<symbol id="s10" viewBox="0 0 20 20"><path d="M2 9q3-6 9-7l7 2q-5 4-4 12-5-3-8 1z" fill="url(#gb)" stroke="#2b4b8c"/><circle cx="10" cy="7" r="2" fill="#c22020"/></symbol>
<symbol id="chev" viewBox="0 0 12 10"><path d="M1 1h2.500L6 6l2.500-5H11L7 9H5z" fill="#555"/></symbol>
<symbol id="cam" viewBox="0 0 26 26"><path d="M17 12l8-6v14l-8-5z" fill="#fff"/><circle cx="12" cy="13" r="11" fill="#fff"/><path d="M20 12l4-3v8l-4-2z" fill="#2b9ad3"/><circle cx="12" cy="13" r="8.500" fill="#5bb8ea"/><rect x="7" y="8" width="10" height="10" rx="3" fill="#1a76bf"/><path d="M6 10q2-4 7-4l-3 4z" fill="#bde6fb"/></symbol>
<symbol id="sg" viewBox="0 0 29 29"><path d="M1 7q0-3 3-3L21 1q3 0 4 3l3 17q0 3-3 4L9 28q-3 0-4-3z" fill="#e2572b"/><path d="M21 8q-7-3-11 0-2 4 4 6t5 5q-4 4-12 0" fill="none" stroke="#fff" stroke-width="4"/></symbol>
</svg>

<header class="titlebar d-flex justify-content-between align-items-center overflow-hidden">
<span class="apptitle">32 - <i>建模</i> - [NX7P5_model4.prt]</span><span class="brand me-3">SIEMENS</span>
</header>
<nav class="menubar d-flex align-items-center">
<a href="#">编辑<span class="mono">(<u>E</u>)</span></a><a href="#">视图<span class="mono">(<u>V</u>)</span></a><a href="#">插入<span class="mono">(<u>S</u>)</span></a><a href="#">格式<span class="mono">(<u>R</u>)</span></a><a href="#">工具<span class="mono">(<u>T</u>)</span></a><a href="#">装配<span class="mono">(<u>A</u>)</span></a><a href="#">产品制造信息<span class="mono">(<u>M</u>)</span></a><a href="#">信息<span class="mono">(<u>I</u>)</span></a><a href="#">分析<span class="mono">(<u>L</u>)</span></a><a href="#">首选项<span class="mono">(<u>P</u>)</span></a><a href="#">窗口<span class="mono">(<u>O</u>)</span></a><a href="#"><span class="mono">GC</span>工具箱</a><a href="#">帮助<span class="mono">(<u>H</u>)</span></a><a href="#"><span class="mono">SMART_TOOL</span></a>
</nav>
<section class="bars">
<div class="barrow d-flex" style="margin-left:-5px">
<div class="grp d-flex align-items-center">
<button class="tb"><svg><use href="#new"/></svg></button><button class="tb"><svg><use href="#open"/></svg></button><button class="tb"><svg><use href="#save"/></svg></button><span class="bsep"></span><button class="tb"><svg><use href="#cut"/></svg></button><button class="tb"><svg><use href="#copy"/></svg></button><button class="tb"><svg><use href="#paste"/></svg></button><span class="bsep"></span><button class="tb"><svg><use href="#undo"/></svg></button><button class="tb"><svg><use href="#redo"/></svg></button><span class="bsep"></span><button class="finder"><svg width="22" height="22"><use href="#bino"/></svg>命令查找器</button><span class="bsep"></span><button class="tb"><svg><use href="#info"/></svg></button><button class="car lo"></button>
</div>
<div class="grp d-flex align-items-center"><span class="grip"></span>
<button class="tb"><svg><use href="#fit"/></svg></button><button class="car"></button><button class="tb"><svg><use href="#tray"/></svg></button><button class="car"></button><button class="tb"><svg><use href="#cube"/></svg></button><button class="car"></button><button class="tb"><svg><use href="#yin"/></svg></button><button class="tb"><svg><use href="#hexred"/></svg></button><button class="tb"><svg><use href="#hexgray"/></svg></button><button class="car"></button><button class="tb"><svg><use href="#rectb"/></svg></button><button class="car"></button><span class="bsep"></span><button class="tb"><svg><use href="#door2"/></svg></button><button class="tb"><svg><use href="#door"/></svg></button><button class="car lo"></button>
</div>
<div class="grp d-flex align-items-center"><span class="grip"></span>
<button class="tb"><svg><use href="#layers"/></svg></button><button class="tb"><svg><use href="#axes"/></svg></button><button class="car"></button><span class="bsep"></span><button class="tb"><svg><use href="#palette"/></svg></button><button class="tb"><svg><use href="#rgdiam"/></svg></button><button class="car"></button><span class="bsep"></span><button class="tb"><svg><use href="#ruler"/></svg></button><button class="tb"><svg><use href="#angle"/></svg></button><button class="car lo"></button>
</div>
</div>
<div class="barrow d-flex">
<div class="grp d-flex align-items-center">
<button class="tb"><svg><use href="#sk"/></svg></button><button class="tb"><svg><use href="#hole"/></svg></button><button class="tb"><svg><use href="#boss"/></svg></button><button class="tb"><svg><use href="#sweep"/></svg></button><span class="bsep"></span><button class="tb"><svg><use href="#ext"/></svg></button><button class="tb"><svg><use href="#patt"/></svg></button><button class="tb"><svg><use href="#inst"/></svg></button><button class="tb"><svg><use href="#unite"/></svg></button><button class="car"></button><button class="tb"><svg><use href="#trim"/></svg></button><button class="tb"><svg><use href="#off"/></svg></button><button class="tb"><svg><use href="#split"/></svg></button><button class="tb"><svg><use href="#plate"/></svg></button><button class="tb"><svg><use href="#boxin"/></svg></button><button class="tb"><svg><use href="#curv"/></svg></button><span class="bsep"></span><button class="tb"><svg><use href="#blend"/></svg></button><button class="tb"><svg><use href="#face"/></svg></button><button class="tb"><svg><use href="#face"/></svg></button><button class="tb"><svg><use href="#cham"/></svg></button><button class="tb"><svg><use href="#cubep"/></svg></button><button class="tb"><svg><use href="#sphere"/></svg></button><button class="car lo"></button>
</div>
<div class="grp d-flex align-items-center"><span class="grip"></span>
<button class="tb"><svg><use href="#pmove"/></svg></button><button class="car"></button><button class="tb"><svg><use href="#ptri"/></svg></button><button class="car"></button><button class="tb"><svg><use href="#px"/></svg></button><button class="tb"><svg><use href="#pcopy"/></svg></button><button class="car"></button><button class="tb"><svg><use href="#pbox"/></svg></button><button class="car"></button><button class="tb"><svg><use href="#pdim"/></svg></button><button class="car"></button><button class="tb"><svg><use href="#pgrp"/></svg></button><button class="car lo"></button>
</div>
<div class="grp d-flex align-items-center"><span class="grip"></span>
<button class="tb"><svg><use href="#surf"/></svg></button><button class="tb"><svg><use href="#surf2"/></svg></button><button class="tb"><svg><use href="#curves"/></svg></button><button class="tb"><svg><use href="#surf3"/></svg></button><button class="tb"><svg><use href="#mesh"/></svg></button><button class="tb"><svg><use href="#cross"/></svg></button><button class="tb"><svg><use href="#patch"/></svg></button><button class="tb"><svg><use href="#roll"/></svg></button><button class="car lo"></button>
</div>
</div>
<div class="barrow d-flex" style="margin-left:-11px">
<div class="grp d-flex align-items-center">
<button class="tb"><svg viewBox="0 0 24 24"><use href="#box" x="0" y="5" width="24" height="19"/><text x="12" y="9" font-size="11" text-anchor="middle" fill="#1b2080" stroke="#1b2080" stroke-width=".3">G/s</text></svg></button><button class="tb"><svg viewBox="0 0 24 24"><use href="#box" x="0" y="5" width="24" height="19"/><text x="12" y="9" font-size="11" text-anchor="middle" fill="#b01818" stroke="#b01818" stroke-width=".3">O/s</text></svg></button><button class="tb"><svg viewBox="0 0 24 24"><use href="#box" x="0" y="5" width="24" height="19"/><text x="12" y="9" font-size="11" text-anchor="middle" fill="#1b2080" stroke="#1b2080" stroke-width=".3">G/h</text></svg></button><button class="tb"><svg viewBox="0 0 24 24"><use href="#box" x="0" y="5" width="24" height="19"/><text x="12" y="9" font-size="11" text-anchor="middle" fill="#b01818" stroke="#b01818" stroke-width=".3">O/h</text></svg></button><button class="tb"><svg><use href="#hand"/></svg></button><button class="car lo"></button>
</div>
<div class="grp d-flex align-items-center"><span class="grip"></span>
<button class="tb"><svg><use href="#gry1"/></svg></button><button class="tb"><svg><use href="#gry2"/></svg></button><button class="tb"><svg><use href="#gry3"/></svg></button><button class="tb"><svg><use href="#gry4"/></svg></button><button class="tb"><svg><use href="#gry5"/></svg></button><button class="car lo"></button>
</div>
<div class="grp d-flex align-items-center"><span class="grip"></span>
<button class="tb"><svg><use href="#chk1"/></svg></button><button class="tb"><svg><use href="#chk2"/></svg></button><button class="tb"><svg><use href="#chk3"/></svg></button><button class="car lo"></button>
</div>
</div>
</section>
<section class="selbar d-flex align-items-center">
<div class="combowrap me-2"><select class="combo border-start-0 ps-0" style="width:36px" aria-label="选择过滤"><option>器</option></select><svg width="16" height="15"><path d="M0 0h14l2 2v11l-2 2H0z" fill="#6fabd8"/><path d="M3 5h10l-5 6z"/></svg></div>
<div class="combowrap"><select class="combo" style="width:117px" aria-label="选择范围"><option>整个装配</option></select><svg width="16" height="15"><path d="M0 0h14l2 2v11l-2 2H0z" fill="#6fabd8"/><path d="M3 5h10l-5 6z"/></svg></div>
<button class="sb ms-1"><svg><use href="#glove"/></svg></button><span class="bsep"></span><button class="sb"><svg><use href="#filt"/></svg></button><button class="car slim"></button><button class="sb"><svg><use href="#ret"/></svg></button><button class="sb"><svg><use href="#wire"/></svg></button><button class="sb"><svg><use href="#rot"/></svg></button><button class="sb"><svg><use href="#find"/></svg></button><span class="bsep"></span><button class="sb"><svg><use href="#dash"/></svg></button><button class="car"></button><span class="bsep"></span><button class="sb on"><svg><use href="#s1"/></svg></button><button class="sb on"><svg><use href="#s2"/></svg></button><button class="sb on"><svg><use href="#s3"/></svg></button><button class="sb"><svg><use href="#s4"/></svg></button><button class="sb"><svg><use href="#s5"/></svg></button><button class="sb on"><svg><use href="#s6"/></svg></button><button class="sb"><svg><use href="#s7"/></svg></button><button class="sb on"><svg><use href="#s8"/></svg></button><button class="sb on"><svg><use href="#s9"/></svg></button><button class="sb"><svg><use href="#s10"/></svg></button><span class="bsep"></span><button class="sb"><svg viewBox="-2 -2 28 28"><use href="#cube" width="24" height="24"/></svg></button>
</section>
<section class="cue d-flex align-items-center">
<div style="flex:0 0 671px"></div><output class="flex-grow-1">草图<span class="mono"> 'SKETCH_000' </span>已选定</output><div class="border-start border-white h-100" style="width:18px"></div>
</section>

<main class="d-flex flex-grow-1 overflow-hidden" style="min-height:0">
<aside class="side d-flex flex-column flex-shrink-0">
<h1>部件导航器</h1>
<div class="tree flex-grow-1 d-flex flex-column" style="min-height:0">
<div class="flex-grow-1 overflow-hidden" style="min-height:0">
<table><colgroup><col style="width:164px"><col></colgroup>
<thead><tr><th><svg width="10" height="6" style="margin-left:9px"><path d="M0 6l5-6 5 6z"/></svg></th><th class="ps-1 border-start border-secondary">图层</th></tr></thead>
<tbody>
<tr><td><div class="cell">历史记录模式</div></td><td></td></tr>
<tr><td><div class="cell">模型视图</div></td><td></td></tr>
<tr><td><div class="cell ps-0"><svg width="15" height="15"><path d="M0 4l9-3 6 6-3 7-12-2z" fill="#c75a98"/><path d="M1 4l8-2-1 8-7 2z" fill="#e7e5f3" stroke="#667"/><circle cx="5" cy="7" r="2" fill="#99a"/><path d="M0 13l6-4" stroke="#c33" stroke-width="2"/></svg>摄像机</div></td><td></td></tr>
<tr><td><div class="cell ps-0"><svg width="15" height="15"><path d="M2 1h12v9H2z" fill="#dfe6fa" stroke="#35508e"/><path d="M0 4h12v10H0z" fill="#f2f5ff" stroke="#35508e"/><path d="M0 5h12M6 10h6M8 10v4" stroke="#35508e"/></svg><span class="mono">Drawing</span></div></td><td></td></tr>
<tr><td><div class="cell">组</div></td><td></td></tr>
<tr><td><div class="cell">模型历史记录</div></td><td></td></tr>
<tr><td><div class="cell gap-0 pt-0"><svg width="33" height="18"><path d="M2.500 3.500h11v11h-11z" fill="#fff" stroke="#222"/><path d="M4 8l3 4 5-7" fill="none" stroke="#2a9d38" stroke-width="2.500"/><path d="M17.500 2.500h7v5h-7zM17.500 10.500h6v6h-6zM25.500 10.500h6v6h-6z" fill="#fff" stroke="#333"/><path d="M23 9l7-7 2 2-7 7z" fill="#f0b637" stroke="#713"/></svg><div class="selrow flex-grow-1 h-100 d-flex align-items-center">草图<span class="mono" style="white-space:pre"> (0) "SKETCH_...</span></div></div></td><td class="selrow"><span class="mono ps-1">61</span></td></tr>
<tr><td></td><td></td></tr><tr><td></td><td></td></tr><tr><td></td><td></td></tr><tr><td></td><td></td></tr><tr><td></td><td></td></tr><tr><td></td><td></td></tr><tr><td></td><td></td></tr><tr><td></td><td></td></tr><tr><td></td><td></td></tr><tr><td></td><td></td></tr><tr><td></td><td></td></tr><tr><td></td><td></td></tr><tr><td></td><td></td></tr><tr><td></td><td></td></tr><tr><td></td><td></td></tr><tr><td></td><td></td></tr><tr><td></td><td></td></tr><tr><td></td><td></td></tr>
</tbody></table>
</div>
<div class="hbar d-flex align-items-center justify-content-between flex-shrink-0"><div class="hthumb"></div><svg width="8" height="10" class="me-1"><path d="M1 1l4 4-4 4" fill="none" stroke="#333" stroke-width="1.500"/></svg></div>
</div>
<div class="split d-flex align-items-center gap-1 flex-shrink-0" style="width:193px"><hr><span></span><hr style="flex-grow:2"></div>
<div class="flex-shrink-0 pb-1">
<div class="pane d-flex justify-content-between align-items-center"><span style="margin-left:-6px">性</span><button class="d-flex align-items-center justify-content-center" aria-label="展开"><svg width="15" height="12"><use href="#chev"/></svg></button></div>
<div class="pane d-flex justify-content-end"><button class="d-flex align-items-center justify-content-center" aria-label="展开"><svg width="15" height="12"><use href="#chev"/></svg></button></div>
<div class="pane d-flex justify-content-end"><button class="d-flex align-items-center justify-content-center" aria-label="展开"><svg width="15" height="12"><use href="#chev"/></svg></button></div>
</div>
</aside>
<div class="view flex-grow-1 overflow-hidden">
<svg width="100%" height="100%" class="axis">
<path d="M-10 114L638 94.500 785 262 225 420-10 154" fill="none" stroke="#e8964e" stroke-width="3.500" stroke-linejoin="round"/>
<path d="M437 250l20-4 47 3-47 4z" fill="#d8474c"/><path d="M437 250l20-3 47 2z" fill="#a82c34"/>
<path d="M510 243l9-37 9-15-1 19z" fill="#1330a0"/><path d="M511 253l11 34 10 14-1-19z" fill="#32a83a"/>
<text x="501" y="189" fill="#1c3cc8">ZC</text><text x="437" y="270" fill="#c93c3c">XC</text><text x="506" y="317" fill="#2d9433">YC</text>
<circle cx="557" cy="220" r="7.500" fill="#7f8512"/>
<circle cx="572" cy="235" r="10" fill="none" stroke="#ddd" stroke-dasharray="12 3.700" stroke-dashoffset="-2"/><path d="M557 235.500h30M572.500 220v30" stroke="#fff"/>
</svg>
</div>
</main>

<footer class="taskbar d-flex justify-content-between flex-shrink-0">
<div class="d-flex">
<button class="tk"><svg viewBox="0 0 26 26"><circle cx="13" cy="13" r="7" fill="none" stroke="#fff" stroke-width="2.200"/></svg></button>
<button class="tk"><svg viewBox="0 0 26 26"><path d="M5 5v3h11V5M5 21v-3h11v3M5 10.500h11v5H5zM20 5v3M20 15v6" fill="none" stroke="#fff" stroke-width="1.300"/><path d="M19 10h3v3h-3z" fill="#fff"/></svg></button>
<button class="tk"><svg viewBox="0 0 26 26"><circle cx="13" cy="13" r="9.500" fill="#29242c"/><path d="M18 3a11 11 0 0 0-15 14" fill="none" stroke="#e08c5a" stroke-width="2.200"/><path d="M3 17a11 11 0 0 0 20-11l-4 3" fill="none" stroke="#b97e94" stroke-width="2.200"/><circle cx="13" cy="13" r="4" fill="#fff"/><circle cx="13" cy="13" r="1.200" fill="#222"/></svg></button>
<button class="tk"><svg viewBox="0 0 26 26"><path d="M1 15l7-4 6-4-3 10-4 2z" fill="#4b88ba"/><path d="M8 19q5-4 8-16 4 9 8 16-5-2-8 5-3-5-8-5z" fill="#e26b23"/><path d="M16 3q1 8-3 15l3 6q1-12 0-21z" fill="#8e2216"/></svg></button>
<button class="tk"><svg viewBox="0 0 26 26"><ellipse cx="14" cy="8" rx="10" ry="6" fill="#f2eeee" stroke="#b7868b" transform="rotate(-10 14 8)"/><path d="M2 17q1-5 9-5l3 4q-6 5-12 1z" fill="#cb8389"/><path d="M13 7l5 10M21 7l-5 10" stroke="#667" stroke-width="1.300"/><circle cx="15" cy="21" r="3" fill="none" stroke="#2a82af" stroke-width="1.700"/><circle cx="21" cy="18" r="3" fill="none" stroke="#2a82af" stroke-width="1.700"/></svg></button>
<button class="tk"><svg><use href="#cam"/></svg></button>
<button class="tk"><svg viewBox="0 0 26 26"><path d="M2 2h22v22H2z" fill="#f8d60d"/><path d="M13 24V14h11z" fill="#3a3a2d"/><path d="M13 24l11-10v10z" fill="#f8b900"/></svg></button>
<button class="tk"><svg viewBox="0 0 26 26"><circle cx="13" cy="13" r="12" fill="#1583cd"/><path d="M2 8q5-9 15-7 8 3 8 10 0 5-5 5h-5q3-7-3-7-6 0-10 5z" fill="#45d2a2"/><path d="M10 12q-3 7 4 10l7-1q-4 5-10 4-6-4-4-10z" fill="#0c4a96"/></svg></button>
<button class="tk"><svg viewBox="0 0 26 26"><rect x="1" y="1" width="24" height="24" rx="3" fill="#3a7ef0"/><path d="M4 6q5 5 9 4 0-5 4-7l1 4h4l-4 3q2 5-1 8l2 5-5-3q-6 1-7-5 2 1 3 0Q5 12 4 6z" fill="#fff"/></svg></button>
<button class="tk run"><svg viewBox="0 0 26 26"><path d="M3 4h8l2 2h11v17H3z" fill="#f9cd55"/><path d="M7 14h13v9h-4v-4h-5v4H7z" fill="#4690cf"/><path d="M3 9h21" stroke="#fde49c"/></svg></button>
<button class="tk run act"><svg viewBox="0 0 26 26"><circle cx="13" cy="14" r="10" fill="#1689cf"/><path d="M4 16q7 9 17 3-4 6-10 5-5-2-7-8z" fill="#36ae42"/><path d="M3 2l11-1-4 12z" fill="#cb2336"/><path d="M18 7q8-1 7 3-5 9-20 14" fill="none" stroke="#ffc64a" stroke-width="2"/></svg></button>
</div>
<div class="tray d-flex align-items-center">
<svg width="420" height="40"><use href="#sg" x="8" y="10" width="16" height="16"/><path d="M146 26q-3-7 4-7 2-5 8-2 7 1 7 9z" fill="#d5e8fb"/><path d="M254 24l5-5 5 5M275 14v5M280 14v5M273 19h9v4h-9zM278 23v5M285 17h5v9h-5M308 28q1-10 12-11M312 28q1-6 8-7M316 28l4-3M323 17h3l5-4v14l-5-4h-3zM335 16q3 4 0 9M338 13q5 7 0 14M349 14h20v11h-20zM352 18h14M352 22h14" fill="none" stroke="#fff" stroke-width="1.300"/><text x="174" y="25" fill="#fff" font-size="14">2°C</text><text x="208" y="25" fill="#fff" font-size="13">多云</text><text x="394" y="15" fill="#fff" font-size="12">21:42</text><text x="384" y="34" fill="#fff" font-size="12">2022/2</text></svg>
</div>
</footer>

<div class="ime d-flex align-items-center">
<svg class="slogo"><use href="#sg"/></svg>
<button><svg viewBox="0 0 18 18"><path d="M3 16L9 2l6 14M5 11h8" fill="none" stroke="#2171b5" stroke-width="2.200"/></svg></button><button><svg viewBox="0 0 18 18"><circle cx="6" cy="6" r="2" fill="#2171b5"/><path d="M12 9v3l-2 2" stroke="#2171b5" stroke-width="2" fill="none"/></svg></button><button><svg viewBox="0 0 18 18"><circle cx="9" cy="9" r="7" fill="none" stroke="#2171b5" stroke-width="1.700"/><path d="M6 6v2M12 6v2M5 10q4 5 8 0" fill="none" stroke="#2171b5" stroke-width="1.700"/></svg></button><button><svg viewBox="0 0 18 18"><rect x="6" y="1" width="6" height="10" rx="3" fill="#2171b5"/><path d="M3 8q0 6 6 6t6-6M9 14v3" fill="none" stroke="#2171b5" stroke-width="1.600"/></svg></button><button><svg viewBox="0 0 18 18"><rect x="1" y="3" width="16" height="12" rx="1" fill="#2171b5"/><path d="M3 6h12M3 9h12M5 12h8" stroke="#fff" stroke-dasharray="2 1" stroke-width="1.500"/></svg></button><button><svg viewBox="0 0 18 18"><circle cx="7" cy="5" r="3" fill="#b5c1cb"/><path d="M2 14q0-5 5-5t4 5z" fill="#b5c1cb"/><path d="M9 9h8v7H9z" fill="#eef2f5" stroke="#a8b5c0"/><path d="M11 11v4M13 11h2v2h-2v2h2" fill="none" stroke="#a8b5c0"/></svg></button><button><svg viewBox="0 0 18 18"><path d="M6 2q3 3 6 0l5 3-2 4-2-1v8H5V8L3 9 1 5z" fill="#2171b5"/></svg></button><button><svg viewBox="0 0 18 18"><path d="M2 2h6v6H2zM2 10h6v6H2zM10 10h6v6h-6z" fill="#2171b5"/><path d="M11 3h4v4h-4z" fill="none" stroke="#2171b5" stroke-width="1.500"/></svg></button>
</div>

<section class="rec">
<div class="rechead d-flex align-items-center justify-content-between px-2"><svg width="26" height="24"><use href="#cam"/></svg><span>录制中... 00:02:18</span><button aria-label="关闭"><svg width="16" height="16"><path d="M3 3l10 10M13 3L3 13" stroke="#fff" stroke-width="2"/></svg></button></div>
<div class="recbody d-flex align-items-center">
<button class="ms-2 pausebtn" aria-label="暂停"><svg width="26" height="24"><rect x="6" y="2" width="5" height="20" rx="1" fill="#2473b8"/><rect x="15" y="2" width="5" height="20" rx="1" fill="#2473b8"/></svg></button>
<button class="me-2" aria-label="停止"><svg width="20" height="20"><rect width="20" height="20" rx="4" fill="#d16239"/></svg></button>
<span class="rline mx-1"></span>
<button class="ms-2" aria-label="音量"><svg width="32" height="30"><path d="M4 25h24" stroke="#c95637" stroke-width="3" stroke-dasharray="4 1"/></svg></button>
<button class="flagbtn" aria-label="标记"><svg width="32" height="32"><path d="M10 6h12l-8 23h-3z" fill="#b8d8ee"/><path d="M10 6v24" stroke="#3b99c9" stroke-width="2.500"/><path d="M5 1h8l3 3-4 6H5z" fill="#3b99c9"/><circle cx="10" cy="6" r="2" fill="#fff"/><path d="M15 6.500h12M15 18.500h12" stroke="#899"/></svg></button>
<span class="rline"></span>
<button class="ms-2" aria-label="摄像头"><svg width="26" height="28"><circle cx="11" cy="11" r="8" fill="none" stroke="#3594c6" stroke-width="2.500"/><circle cx="11" cy="11" r="3" fill="none" stroke="#3594c6" stroke-width="2.500"/><path d="M5 25h9M9 19v5" stroke="#3594c6" stroke-width="3"/><circle cx="19" cy="19" r="6.500" fill="#81c94a"/><path d="M19 15v8M15 19h8" stroke="#fff" stroke-width="1.500"/></svg></button>
<button class="car ms-2" aria-label="更多"></button>
<button class="ms-2" aria-label="画笔"><svg width="26" height="26"><path d="M1 25v-7L13 6l7 7L8 25zM15 4l3-3 7 7-3 3z" fill="#3594c6"/></svg></button>
</div>
</section>
<div class="wm">交流微信wei021946</div>
<script src="https://cdn.jsdelivr.net/npm/bootstrap@5.3.0/dist/js/bootstrap.bundle.min.js"></script>
</body>
</html>
